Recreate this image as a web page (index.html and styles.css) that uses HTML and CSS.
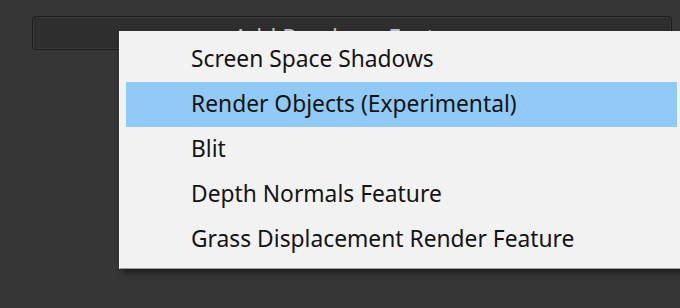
FILE: index.html
```html
<!DOCTYPE html>
<html lang="en">
<head>
    <meta charset="UTF-8">
    <meta name="viewport" content="width=device-width, initial-scale=1.0">
    <title>Add Renderer Feature</title>
    <link rel="stylesheet" href="styles.css">
</head>
<body>
    <div class="inspector">
        <button class="add-button">Add Renderer Feature</button>
    </div>

    <div class="menu">
        <div class="menu-item">Screen Space Shadows</div>
        <div class="menu-item selected">Render Objects (Experimental)</div>
        <div class="menu-item">Blit</div>
        <div class="menu-item">Depth Normals Feature</div>
        <div class="menu-item">Grass Displacement Render Feature</div>
    </div>
</body>
</html>
```

FILE: styles.css
```css
body {
    margin: 0;
    height: 308px;
    overflow: hidden;
    background-color: #363636;
    font-family: "Noto Sans", "Open Sans", sans-serif;
}
.inspector {
    padding: 16px 8px 0 32px;
}
.add-button {
    display: block;
    width: 640px;
    height: 34px;
    padding: 0;
    background-color: #2e2e2e;
    color: #c4c4c4;
    border: 1px solid #1c1c1c;
    border-radius: 4px;
    box-shadow: inset 0 0 0 1px #3a3a3a;
    font-family: inherit;
    font-size: 23px;
    line-height: 40px;
    text-align: center;
    vertical-align: top;
    overflow: hidden;
}
.menu {
    position: absolute;
    top: 31px;
    left: 119px;
    width: 551px;
    padding: 6px 6px;
    background-color: #f2f2f2;
    border-left: 1px solid #fbfbfb;
    border-bottom: 1px solid #a0a0a0;
    box-shadow: 3px 4px 6px rgba(0, 0, 0, 0.45);
}
.menu-item {
    height: 45px;
    padding-left: 65px;
    font-size: 22.8px;
    line-height: 44px;
    color: #141414;
    white-space: nowrap;
}
.selected {
    background-color: #91c9f7;
}
```
